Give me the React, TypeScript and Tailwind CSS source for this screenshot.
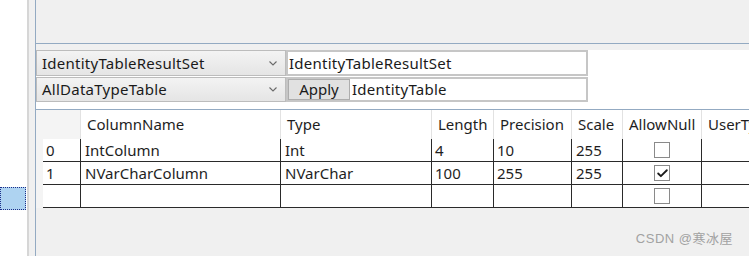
import { Check } from "lucide-react";

const font = { fontFamily: '"Noto Sans", "Noto Sans CJK SC", sans-serif' };

type Row = {
  idx: string;
  name: string;
  type: string;
  length: string;
  precision: string;
  scale: string;
  allowNull: boolean;
};

const rows: Row[] = [
  { idx: "0", name: "IntColumn", type: "Int", length: "4", precision: "10", scale: "255", allowNull: false },
  { idx: "1", name: "NVarCharColumn", type: "NVarChar", length: "100", precision: "255", scale: "255", allowNull: true },
  { idx: "", name: "", type: "", length: "", precision: "", scale: "", allowNull: false }
];

const cols = [
  { key: "idx", label: "", w: "w-[38px]" },
  { key: "name", label: "ColumnName", w: "w-[200px]" },
  { key: "type", label: "Type", w: "w-[151px]" },
  { key: "length", label: "Length", w: "w-[62px]" },
  { key: "precision", label: "Precision", w: "w-[78px]" },
  { key: "scale", label: "Scale", w: "w-[51px]" },
  { key: "allowNull", label: "AllowNull", w: "w-[79px]" },
  { key: "userType", label: "UserType", w: "w-[80px]" }
] as const;

function Chevron() {
  return (
    <svg width="8" height="5" viewBox="0 0 8 5" className="shrink-0">
      <path d="M0.5 0.5 L4 4 L7.5 0.5" fill="none" stroke="#6a6a6a" strokeWidth="1.1" />
    </svg>
  );
}

function Combo({ text }: { text: string }) {
  return (
    <div className="flex h-full w-[250px] items-center justify-between border border-[#bcbcbc] bg-gradient-to-b from-[#f3f3f3] to-[#e5e5e5] pl-[5px] pr-[8px] text-[15px] text-[#1a1a1a]">
      <span className="tracking-[0.25px]">{text}</span>
      <Chevron />
    </div>
  );
}

function CheckCell({ checked }: { checked: boolean }) {
  return (
    <div className="flex h-[16px] w-[16px] items-center justify-center border border-[#8a8a8a] bg-white">
      {checked && <Check size={13} strokeWidth={3.4} color="#1a1a1a" />}
    </div>
  );
}

export default function App() {
  return (
    <div className="flex h-[256px] w-[749px] overflow-hidden bg-[#f0f0f0]" style={font}>
      {/* left list */}
      <div className="flex w-[27px] shrink-0 flex-col bg-white pt-[187px]">
        <div className="h-[23px] w-[26px] border border-dotted border-[#1c2f8a] bg-[#aed3f1]" />
      </div>
      <div className="w-[2px] shrink-0 bg-[#d6d6d6]" />
      <div className="w-[6px] shrink-0 bg-[#f0f0f0]" />

      {/* main */}
      <div className="flex min-w-0 flex-1 flex-col border-l border-[#93aac2]">
        <div className="h-[44px] shrink-0 border-b border-[#93aac2] bg-[#f0f0f0]" />
        <div className="h-[6px] shrink-0 bg-[#f0f0f0]" />

        <div className="flex h-[59px] shrink-0 flex-col gap-[1px] bg-white">
          <div className="flex h-[26px]">
            <Combo text="IdentityTableResultSet" />
            <div className="flex w-[302px] items-center border-2 border-[#c6c6c6] bg-white pl-[1px] text-[15px] tracking-[0.25px] text-[#1a1a1a]">
              IdentityTableResultSet
            </div>
          </div>
          <div className="flex h-[25px]">
            <Combo text="AllDataTypeTable" />
            <div className="flex w-[302px] items-center border-2 border-[#c6c6c6] bg-white text-[15px] text-[#1a1a1a]">
              <div className="flex h-full w-[62px] items-center justify-center border border-[#adadad] bg-[#e1e1e1]">
                Apply
              </div>
              <span className="pl-[2px] tracking-[0.25px]">IdentityTable</span>
            </div>
          </div>
        </div>

        {/* grid */}
        <div className="flex flex-1 flex-col border-t border-[#93aac2] bg-[#f0f0f0]">
          <div className="flex text-[15px] text-[#1e1e1e]">
            <div className="w-[7px] shrink-0 bg-[#f4f4f4]" />
            <div className="flex flex-col">
              <div className="flex h-[29px]">
                {cols.map((c, i) => (
                  <div
                    key={c.key}
                    className={`${c.w} flex shrink-0 items-center overflow-hidden border-r border-[#e2e2e2] pl-[6px] ${i === 0 ? "bg-[#f4f4f4]" : "bg-white"}`}
                  >
                    <span className="whitespace-nowrap">{c.label}</span>
                  </div>
                ))}
              </div>
              {rows.map((r, ri) => (
                <div key={ri} className="flex h-[23px] border-b border-[#2a2a2a] bg-white">
                  <div className="flex w-[38px] shrink-0 items-center border-r border-[#2a2a2a] pl-[3px]">{r.idx}</div>
                  <div className="flex w-[200px] shrink-0 items-center border-r border-[#2a2a2a] pl-[4px]">{r.name}</div>
                  <div className="flex w-[151px] shrink-0 items-center border-r border-[#2a2a2a] pl-[4px]">{r.type}</div>
                  <div className="flex w-[62px] shrink-0 items-center border-r border-[#2a2a2a] pl-[3px]">{r.length}</div>
                  <div className="flex w-[78px] shrink-0 items-center border-r border-[#2a2a2a] pl-[3px]">{r.precision}</div>
                  <div className="flex w-[51px] shrink-0 items-center border-r border-[#2a2a2a] pl-[4px]">{r.scale}</div>
                  <div className="flex w-[79px] shrink-0 items-center justify-center border-r border-[#2a2a2a]">
                    <CheckCell checked={r.allowNull} />
                  </div>
                  <div className="w-[80px] shrink-0" />
                </div>
              ))}
            </div>
          </div>

          <div className="flex flex-1 items-end justify-end pb-[8px] pr-[16px]">
            <span className="text-[13px] tracking-[0.5px] text-[#a2a2a2]" style={{ fontFamily: '"Liberation Sans", "Noto Sans CJK SC", sans-serif' }}>
              CSDN @寒冰屋
            </span>
          </div>
        </div>
      </div>
    </div>
  );
}
